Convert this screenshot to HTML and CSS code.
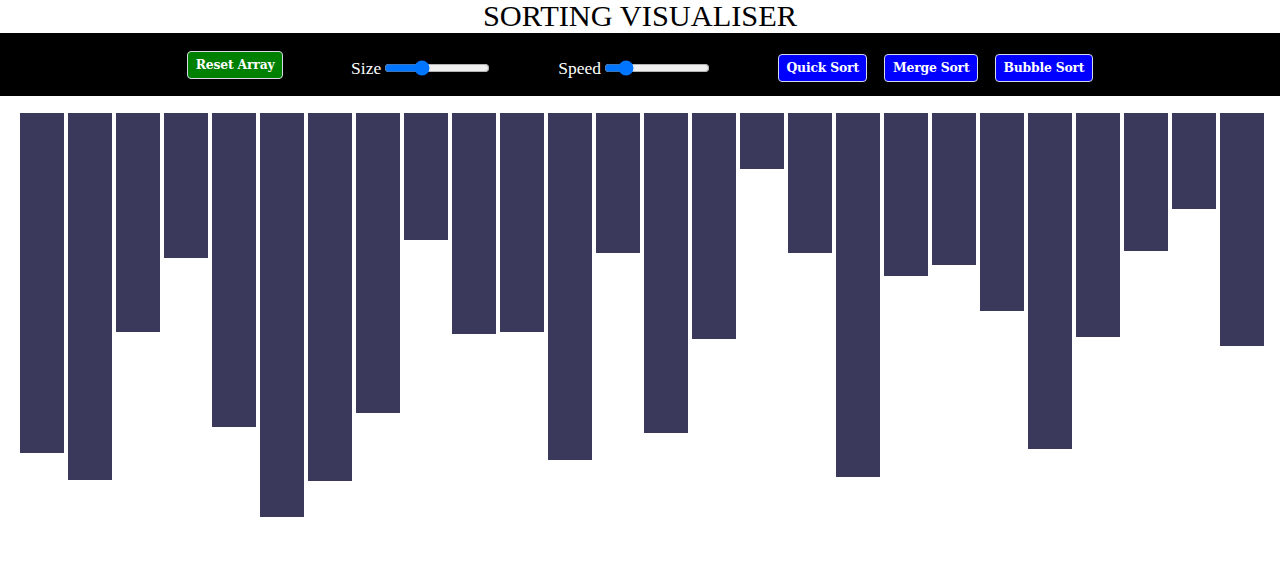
FILE: index.html
```html
<!DOCTYPE html>
<html>
<head>
<meta charset="utf-8">
<title>Sorting Visualiser</title>
<link rel="stylesheet" href="styles.css">
</head>
<body>
<h1 class="title">SORTING VISUALISER</h1>
<nav class="toolbar">
  <button class="btn btn-reset">Reset Array</button>
  <label class="control">Size <input class="slider" type="range" min="0" max="100" value="33"></label>
  <label class="control">Speed <input class="slider" type="range" min="0" max="100" value="15"></label>
  <div class="sorts">
    <button class="btn btn-sort">Quick Sort</button>
    <button class="btn btn-sort">Merge Sort</button>
    <button class="btn btn-sort">Bubble Sort</button>
  </div>
</nav>
<div class="bars">
  <div class="bar" style="height:340px"></div>
  <div class="bar" style="height:367px"></div>
  <div class="bar" style="height:219px"></div>
  <div class="bar" style="height:145px"></div>
  <div class="bar" style="height:314px"></div>
  <div class="bar" style="height:404px"></div>
  <div class="bar" style="height:368px"></div>
  <div class="bar" style="height:300px"></div>
  <div class="bar" style="height:127px"></div>
  <div class="bar" style="height:221px"></div>
  <div class="bar" style="height:219px"></div>
  <div class="bar" style="height:347px"></div>
  <div class="bar" style="height:140px"></div>
  <div class="bar" style="height:320px"></div>
  <div class="bar" style="height:226px"></div>
  <div class="bar" style="height:56px"></div>
  <div class="bar" style="height:140px"></div>
  <div class="bar" style="height:364px"></div>
  <div class="bar" style="height:163px"></div>
  <div class="bar" style="height:152px"></div>
  <div class="bar" style="height:198px"></div>
  <div class="bar" style="height:336px"></div>
  <div class="bar" style="height:224px"></div>
  <div class="bar" style="height:138px"></div>
  <div class="bar" style="height:96px"></div>
  <div class="bar" style="height:233px"></div>
</div>
</body>
</html>
```

FILE: styles.css
```css
html, body {
  margin: 0;
  padding: 0;
  background: #ffffff;
}

body {
  font-family: "Liberation Serif", "Times New Roman", serif;
  overflow: hidden;
}

.title {
  margin: 0;
  height: 33px;
  font-family: "Liberation Serif", "Times New Roman", serif;
  font-weight: normal;
  font-size: 30.4px;
  line-height: 33px;
  text-align: center;
  color: #000000;
}

.toolbar {
  height: 63px;
  background: #000000;
  display: flex;
  align-items: center;
  justify-content: center;
  gap: 68px;
  padding-top: 6px;
  box-sizing: border-box;
}

.control {
  display: flex;
  align-items: center;
  gap: 3px;
  color: #ffffff;
  font-size: 17.5px;
  line-height: 18px;
}

.slider {
  width: 106px;
  margin: 0;
}

.sorts {
  display: flex;
  gap: 17px;
}

.btn {
  height: 28px;
  padding: 0 7.5px;
  border: 1px solid #d8d8e8;
  border-radius: 4px;
  color: #ffffff;
  font-family: "DejaVu Serif", "Liberation Serif", serif;
  font-weight: bold;
  font-size: 12.4px;
  letter-spacing: -0.2px;
  cursor: pointer;
}

.btn-reset {
  background: #008000;
  margin-top: -6px;
  width: 96px;
  padding: 0;
}

.btn-sort {
  background: #0000ff;
}

.bars {
  display: flex;
  align-items: flex-start;
  gap: 4px;
  padding: 17px 0 0 20px;
}

.bar {
  width: 44px;
  flex: none;
  background: #3a395c;
}
```
